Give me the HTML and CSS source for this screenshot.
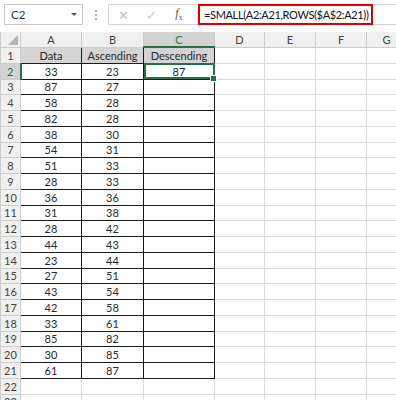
FILE: index.html
```html
<!DOCTYPE html>
<html lang="en">
<head>
  <meta charset="UTF-8">
  <title>SMALL descending</title>
  <link rel="stylesheet" href="styles.css">
</head>
<body>
  <div class="barra">
    <div class="nombre">
      <span>C2</span>
      <span class="flecha"></span>
    </div>
    <div class="puntos"><i></i><i></i><i></i></div>
    <div class="formula">
      <span class="icono gris">&#x2715;</span>
      <span class="icono gris">&#x2713;</span>
      <span class="icono fx"><i>f</i><sub>x</sub></span>
      <div class="texto">=SMALL(A2:A21,ROWS($A$2:A21))</div>
    </div>
  </div>

  <table class="hoja">
    <colgroup>
      <col class="c-num"><col class="c-a"><col class="c-b"><col class="c-c">
      <col class="c-d"><col class="c-e"><col class="c-f"><col class="c-g">
    </colgroup>
    <tr class="cab">
      <th class="esquina"><span></span></th><th>A</th><th>B</th><th class="sel">C</th><th>D</th><th>E</th><th>F</th><th>G</th>
    </tr>
    <tr><th>1</th><td class="t h">Data</td><td class="t h">Ascending</td><td class="t h">Descending</td><td></td><td></td><td></td><td></td></tr>
    <tr><th class="sel">2</th><td class="t">33</td><td class="t">23</td><td class="t activa">87<span class="asa"></span></td><td></td><td></td><td></td><td></td></tr>
    <tr><th>3</th><td class="t">87</td><td class="t">27</td><td class="t"></td><td></td><td></td><td></td><td></td></tr>
    <tr><th>4</th><td class="t">58</td><td class="t">28</td><td class="t"></td><td></td><td></td><td></td><td></td></tr>
    <tr><th>5</th><td class="t">82</td><td class="t">28</td><td class="t"></td><td></td><td></td><td></td><td></td></tr>
    <tr><th>6</th><td class="t">38</td><td class="t">30</td><td class="t"></td><td></td><td></td><td></td><td></td></tr>
    <tr><th>7</th><td class="t">54</td><td class="t">31</td><td class="t"></td><td></td><td></td><td></td><td></td></tr>
    <tr><th>8</th><td class="t">51</td><td class="t">33</td><td class="t"></td><td></td><td></td><td></td><td></td></tr>
    <tr><th>9</th><td class="t">28</td><td class="t">33</td><td class="t"></td><td></td><td></td><td></td><td></td></tr>
    <tr><th>10</th><td class="t">36</td><td class="t">36</td><td class="t"></td><td></td><td></td><td></td><td></td></tr>
    <tr><th>11</th><td class="t">31</td><td class="t">38</td><td class="t"></td><td></td><td></td><td></td><td></td></tr>
    <tr><th>12</th><td class="t">28</td><td class="t">42</td><td class="t"></td><td></td><td></td><td></td><td></td></tr>
    <tr><th>13</th><td class="t">44</td><td class="t">43</td><td class="t"></td><td></td><td></td><td></td><td></td></tr>
    <tr><th>14</th><td class="t">23</td><td class="t">44</td><td class="t"></td><td></td><td></td><td></td><td></td></tr>
    <tr><th>15</th><td class="t">27</td><td class="t">51</td><td class="t"></td><td></td><td></td><td></td><td></td></tr>
    <tr><th>16</th><td class="t">43</td><td class="t">54</td><td class="t"></td><td></td><td></td><td></td><td></td></tr>
    <tr><th>17</th><td class="t">42</td><td class="t">58</td><td class="t"></td><td></td><td></td><td></td><td></td></tr>
    <tr><th>18</th><td class="t">33</td><td class="t">61</td><td class="t"></td><td></td><td></td><td></td><td></td></tr>
    <tr><th>19</th><td class="t">85</td><td class="t">82</td><td class="t"></td><td></td><td></td><td></td><td></td></tr>
    <tr><th>20</th><td class="t">30</td><td class="t">85</td><td class="t"></td><td></td><td></td><td></td><td></td></tr>
    <tr><th>21</th><td class="t">61</td><td class="t">87</td><td class="t"></td><td></td><td></td><td></td><td></td></tr>
    <tr><th>22</th><td></td><td></td><td></td><td></td><td></td><td></td><td></td></tr>
    <tr><th>23</th><td></td><td></td><td></td><td></td><td></td><td></td><td></td></tr>
  </table>
</body>
</html>
```

FILE: styles.css
```css
body {
  margin: 0;
  background: white;
  font-family: Lato, "Liberation Sans", sans-serif;
  color: #2a2a2a;
  overflow: hidden;
  height: 400px;
}

/* barra de formulas */
.barra {
  height: 32px;
  display: flex;
  align-items: flex-start;
  padding-top: 4px;
  box-sizing: border-box;
}

.nombre {
  margin-left: 4px;
  width: 79px;
  height: 21px;
  box-sizing: border-box;
  border: 1px solid #c6c6c6;
  display: flex;
  align-items: center;
  justify-content: space-between;
  padding: 0 5px 0 6px;
  font-size: 11.5px;
  color: #333;
}

.flecha {
  width: 0;
  height: 0;
  border-left: 3px solid transparent;
  border-right: 3px solid transparent;
  border-top: 3px solid #555;
}

.puntos {
  width: 25px;
  height: 21px;
  display: flex;
  flex-direction: column;
  align-items: center;
  justify-content: center;
  gap: 2px;
}

.puntos i {
  width: 2px;
  height: 2px;
  background: #b0b0b0;
}

.formula {
  flex: 1;
  height: 21px;
  box-sizing: border-box;
  border: 1px solid #d4d4d4;
  border-right: none;
  display: flex;
  align-items: center;
}

.icono {
  width: 28px;
  text-align: center;
  font-size: 13px;
}

.gris {
  color: #c4c4c4;
}

.fx {
  font-family: "Liberation Serif", serif;
  font-size: 12px;
  color: #555;
}

.fx sub {
  font-size: 8px;
}

.texto {
  margin-left: 5px;
  width: 175px;
  height: 21px;
  box-sizing: border-box;
  border: 2px solid #e00000;
  font-size: 11px;
  letter-spacing: -0.35px;
  line-height: 17px;
  padding-left: 4px;
  color: #111;
  white-space: nowrap;
  overflow: hidden;
}

/* hoja */
.hoja {
  border-collapse: collapse;
  table-layout: fixed;
  width: 406px;
  font-size: 11px;
}

.c-num { width: 20px; }
.c-a { width: 61px; }
.c-b { width: 62px; }
.c-c { width: 71px; }
.c-d { width: 50px; }
.c-e { width: 51px; }
.c-f { width: 51px; }
.c-g { width: 40px; }

.hoja th,
.hoja td {
  padding: 0;
  height: 14.76px;
  line-height: 13px;
  text-align: center;
  border: 1px solid #dadada;
  white-space: nowrap;
  overflow: visible;
}

.hoja th {
  background: #f0f0f0;
  border-color: #cdcdcd;
  color: #444;
  font-weight: normal;
}

.hoja tr th:first-child {
  font-size: 11px;
}

.cab th {
  height: 14px;
  border-top: none;
}

.esquina {
  position: relative;
}

.esquina span {
  position: absolute;
  right: 2px;
  bottom: 2px;
  width: 0;
  height: 0;
  border-left: 10px solid transparent;
  border-bottom: 10px solid #b5b5b5;
}

.hoja th.sel {
  background: #d3d3d3;
  color: #217346;
}

.cab th.sel {
  border-bottom: 2px solid #217346;
}

.hoja tr th.sel:first-child {
  border-right: 2px solid #217346;
}

.hoja td.t {
  border: 1px solid #1a1a1a;
}

.hoja td.h {
  background: #d4d4d4;
}

.hoja td.activa {
  position: relative;
  outline: 2px solid #217346;
  outline-offset: -2px;
}

.asa {
  position: absolute;
  right: -3px;
  bottom: -3px;
  width: 5px;
  height: 5px;
  background: #217346;
  border: 1px solid white;
}
```
